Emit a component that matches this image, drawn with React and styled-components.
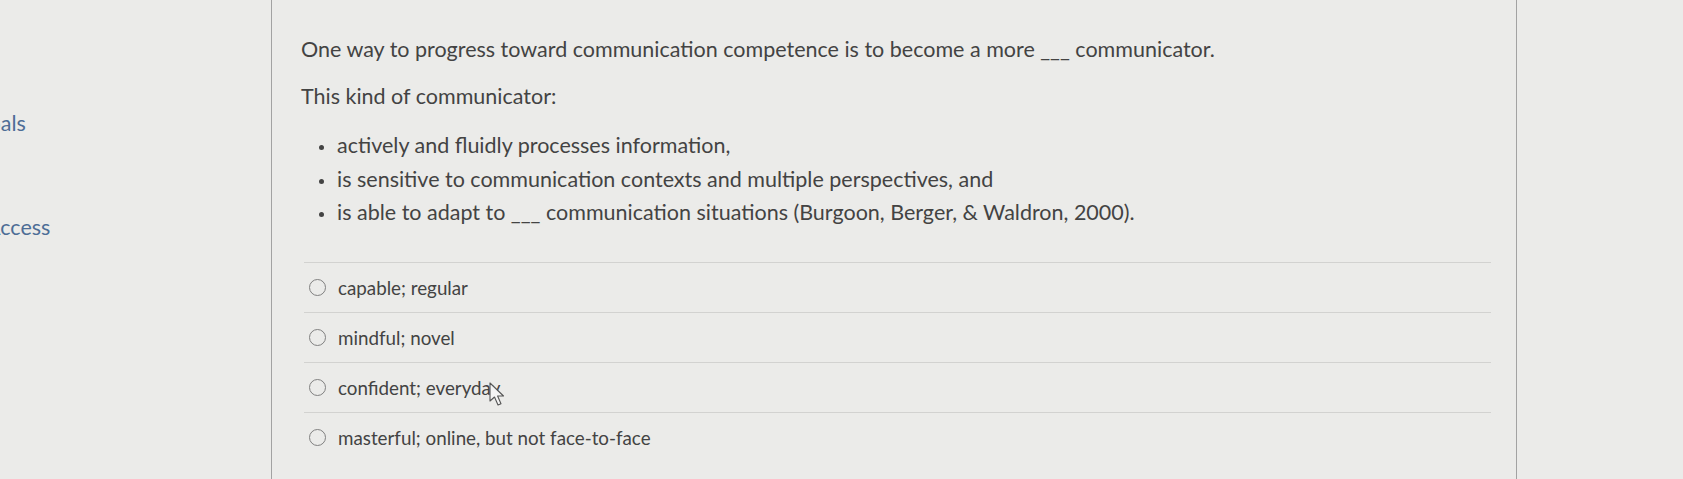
import React from 'react';
import styled, { createGlobalStyle } from 'styled-components';

const GlobalStyle = createGlobalStyle`
  html, body {
    margin: 0;
    padding: 0;
    background: #ebebe9;
  }
  body {
    font-family: Lato, "Open Sans", "Liberation Sans", sans-serif;
    color: #434343;
  }
`;

const Page = styled.div`
  display: flex;
  height: 479px;
  overflow: hidden;
  background: #ebebe9;
`;

const Sidebar = styled.nav`
  width: 272px;
  flex-shrink: 0;
  border-right: 1.5px solid #a2a2a2;
  overflow: hidden;
  padding-top: 109px;
  box-sizing: border-box;
`;

const NavLink = styled.div`
  font-size: 21.5px;
  color: #4d6d96;
  margin-left: ${props => props.shift}px;
  margin-bottom: 76px;
  white-space: nowrap;
  line-height: 28px;
`;

const Main = styled.main`
  width: 1245px;
  flex-shrink: 0;
  border-right: 1.5px solid #a2a2a2;
  box-sizing: border-box;
  padding: 36px 0 0 29px;
  position: relative;
`;

const Text = styled.p`
  margin: 0 0 ${props => props.gap}px;
  font-size: 21.5px;
  line-height: 27px;
`;

const Bullets = styled.ul`
  margin: 0 0 32px;
  padding-left: 35px;
  font-size: 21.5px;
  line-height: 33.5px;

  li {
    padding-left: 1px;
  }

  li::marker {
    font-size: 15px;
  }
`;

const Options = styled.div`
  margin-left: 3px;
  width: 1187px;
`;

const Option = styled.label`
  display: flex;
  align-items: center;
  height: 49px;
  border-top: 1.5px solid #d2d2d0;
  font-size: 18.8px;
`;

const Radio = styled.span`
  width: 15px;
  height: 15px;
  border: 1.3px solid #808080;
  border-radius: 50%;
  margin: 0 12px 0 5px;
  flex-shrink: 0;
`;

const Cursor = styled.svg`
  position: absolute;
  left: 217px;
  top: 382px;
  width: 16px;
  height: 26px;
`;

const answers = [
  'capable; regular',
  'mindful; novel',
  'confident; everyday',
  'masterful; online, but not face-to-face',
];

function App() {
  return (
    <Page>
      <GlobalStyle />
      <Sidebar>
        <NavLink shift={-27}>Goals</NavLink>
        <NavLink shift={-14}>Access</NavLink>
      </Sidebar>
      <Main>
        <Text gap={20}>
          One way to progress toward communication competence is to become a more ___ communicator.
        </Text>
        <Text gap={19}>This kind of communicator:</Text>
        <Bullets>
          <li>actively and fluidly processes information,</li>
          <li>is sensitive to communication contexts and multiple perspectives, and</li>
          <li>is able to adapt to ___ communication situations (Burgoon, Berger, &amp; Waldron, 2000).</li>
        </Bullets>
        <Options>
          {answers.map(a => (
            <Option key={a}>
              <Radio />
              {a}
            </Option>
          ))}
        </Options>
        <Cursor viewBox="0 0 16 26">
          <path
            d="M1 1 L1 19 L5.5 15 L9 23 L12 21.8 L8.6 14 L14.5 14 Z"
            fill="#f4f4f4"
            stroke="#555"
            strokeWidth="1.1"
            strokeLinejoin="round"
          />
        </Cursor>
      </Main>
    </Page>
  );
}

export default App;
